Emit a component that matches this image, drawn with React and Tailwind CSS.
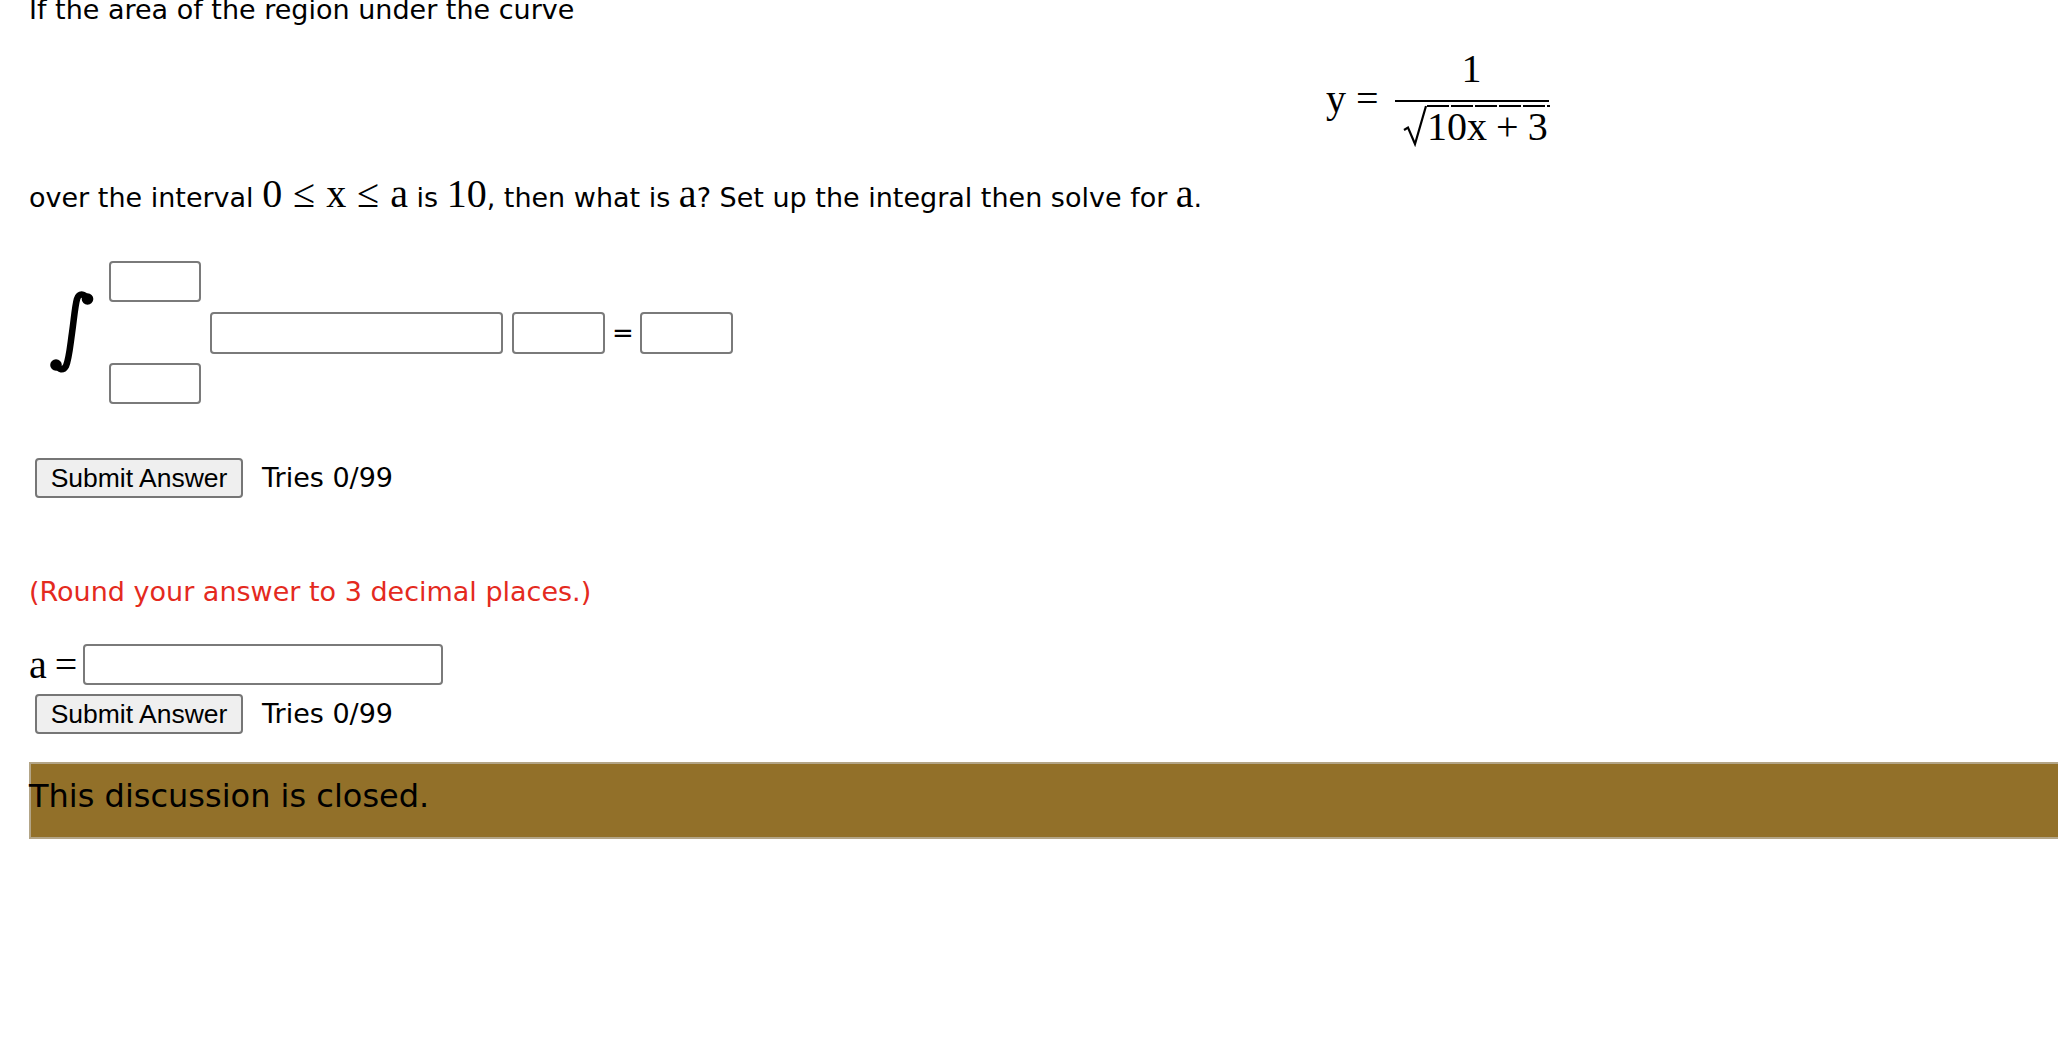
import React from 'react';

const sans = "font-['DejaVu_Sans',Verdana,sans-serif]";
const serif = "font-['Liberation_Serif','Times_New_Roman',serif]";

function Box({ className = '' }) {
  return (
    <input
      type="text"
      className={`h-[41px] border-2 border-[#7a7a7a] rounded-[4px] bg-white outline-none ${className}`}
    />
  );
}

function SubmitRow() {
  return (
    <div className="flex items-center h-[40px]">
      <button className="ml-[6px] h-[40px] w-[208px] bg-[#efefef] border-2 border-[#767676] rounded-[4px] text-[26.5px] text-black font-['Liberation_Sans',Arial,sans-serif] leading-none">
        Submit Answer
      </button>
      <span className="ml-[19px] text-[27px] leading-[40px]">Tries 0/99</span>
    </div>
  );
}

function IntegralSign() {
  return (
    <svg width="46" height="86" viewBox="0 0 46 86" className="ml-[20px] mt-[-2px]">
      <path
        d="M38 10 C35 4 30 4 28 10 C26 17 25 30 23 44 C21 58 20 70 17 77 C14 82 10 81 8 76"
        fill="none"
        stroke="#000"
        strokeWidth="6.5"
        strokeLinecap="round"
      />
      <circle cx="38.5" cy="10" r="5.8" fill="#000" />
      <circle cx="7" cy="76" r="5.8" fill="#000" />
    </svg>
  );
}

function Radical() {
  return (
    <svg width="24" height="42" viewBox="0 0 24 42" className="shrink-0">
      <path d="M1 25 L5 22.5 L12 39 L23 1" fill="none" stroke="#000" strokeWidth="2.2" strokeLinejoin="miter" />
    </svg>
  );
}

function M({ children, className = '' }) {
  return <span className={`${serif} text-[40px] leading-none ${className}`}>{children}</span>;
}

export default function App() {
  return (
    <div className={`w-[2058px] h-[1054px] overflow-hidden bg-white text-black ${sans}`}>
      <div className="pl-[29px]">
        <p className="mt-[-6px] text-[27px] leading-[32px]">If the area of the region under the curve</p>

        {/* displayed formula */}
        <div className="h-[148px] flex items-start ml-[1297px]">
          <div className={`${serif} text-[40px] leading-none flex items-start mt-[53px]`}>
            <span>y</span>
            <span className="ml-[10px]">=</span>
          </div>
          <div className={`${serif} text-[40px] leading-none ml-[16px] mt-[18px] flex flex-col w-[154px]`}>
            <div className="h-[56px] flex items-end justify-center pb-[11px]">1</div>
            <div className="h-[2px] bg-black" />
            <div className="h-[50px] flex items-start justify-center pt-[3px] pl-[10px]">
              <Radical />
              <span className="flex flex-col">
                <span className="h-[2px] w-[123px] bg-[repeating-linear-gradient(90deg,#000_0_22px,transparent_22px_24px)]" />
                <span className="whitespace-pre">10x<span className="mx-[9px]">+</span>3</span>
              </span>
            </div>
          </div>
        </div>

        <p className="text-[27px] leading-[40px]">
          over the interval <M>0</M>
          <M className="mx-[11px]">≤</M>
          <M>x</M>
          <M className="mx-[11px]">≤</M>
          <M>a</M> is <M>10</M>, then what is <M>a</M>? Set up the integral then solve for <M>a</M>.
        </p>

        {/* integral inputs */}
        <div className="mt-[43px] h-[143px] flex items-center">
          <IntegralSign />
          <div className="ml-[14px] flex flex-col gap-[61px]">
            <Box className="w-[92px]" />
            <Box className="w-[92px]" />
          </div>
          <Box className="ml-[9px] w-[293px] h-[42px]" />
          <Box className="ml-[9px] w-[93px] h-[42px]" />
          <span className="ml-[7px] text-[26px] leading-none">=</span>
          <Box className="ml-[6px] w-[93px] h-[42px]" />
        </div>

        <div className="mt-[54px]">
          <SubmitRow />
        </div>

        <p className="mt-[74px] text-[27px] leading-[40px] text-[#e42a1e]">
          (Round your answer to 3 decimal places.)
        </p>

        <div className="mt-[32px] flex items-center">
          <M>a</M>
          <M className="ml-[8px]">=</M>
          <Box className="ml-[6px] w-[360px]" />
        </div>

        <div className="mt-[9px]">
          <SubmitRow />
        </div>

        <div className="mt-[28px] h-[77px] w-[2100px] bg-[#927029] border-2 border-[#b3a587] flex items-start">
          <span className="mt-[12px] text-[32px] leading-[40px] ml-[-2px]">This discussion is closed.</span>
        </div>
      </div>
    </div>
  );
}
